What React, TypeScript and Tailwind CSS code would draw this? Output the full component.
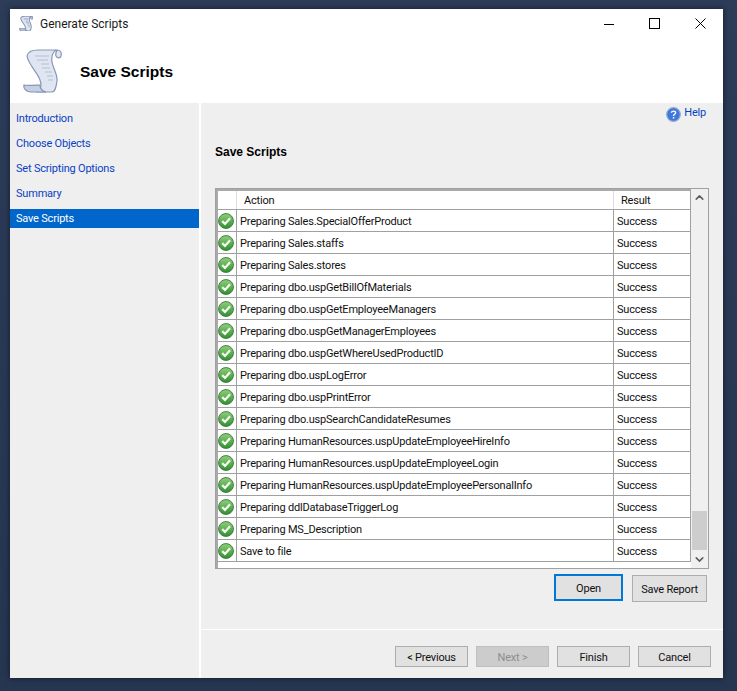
import React from 'react';
import { ChevronUp, ChevronDown } from 'lucide-react';

const navItems = ['Introduction', 'Choose Objects', 'Set Scripting Options', 'Summary', 'Save Scripts'];

const rows = [
  'Preparing Sales.SpecialOfferProduct',
  'Preparing Sales.staffs',
  'Preparing Sales.stores',
  'Preparing dbo.uspGetBillOfMaterials',
  'Preparing dbo.uspGetEmployeeManagers',
  'Preparing dbo.uspGetManagerEmployees',
  'Preparing dbo.uspGetWhereUsedProductID',
  'Preparing dbo.uspLogError',
  'Preparing dbo.uspPrintError',
  'Preparing dbo.uspSearchCandidateResumes',
  'Preparing HumanResources.uspUpdateEmployeeHireInfo',
  'Preparing HumanResources.uspUpdateEmployeeLogin',
  'Preparing HumanResources.uspUpdateEmployeePersonalInfo',
  'Preparing ddlDatabaseTriggerLog',
  'Preparing MS_Description',
  'Save to file',
];

const ScrollIcon: React.FC<{ size: number; stroke: number }> = ({ size, stroke }) => (
  <svg width={size} height={size * 1.1} viewBox="0 0 40 44" fill="none">
    <path d="M5 7 C6 2 11 1 16 1 L35 1 C38 1 40 3 39 7 C38 10 35 9 34 7 C33 4 35 2 35 1 C31 2 29 7 30 13 C31 20 36 25 35 32 C34 39 33 43 30 43 L14 43 C19 41 20 37 18 31 C16 24 6 15 5 7 Z" fill="#dfe5f1" stroke="#8796b6" strokeWidth={stroke} />
    <path d="M2 36 C7 37 14 36 18 36 C18 39 20 42 24 43 L9 43 C5 43 1 40 2 36 Z" fill="#c5cfe3" stroke="#8796b6" strokeWidth={stroke} />
    <path d="M13 7 H27 M15 11 H26 M19 15 H27 M20 19 H28 M23 23 H30 M25 27 H31 M26 31 H31" stroke="#b4bfd4" strokeWidth={stroke} />
  </svg>
);

const CheckIcon: React.FC = () => (
  <svg width="16" height="16" viewBox="0 0 17 17" className="shrink-0">
    <defs>
      <linearGradient id="okGreen" x1="0" y1="0" x2="0" y2="1">
        <stop offset="0" stopColor="#8fd07a" />
        <stop offset="1" stopColor="#2f8f2f" />
      </linearGradient>
    </defs>
    <circle cx="8.5" cy="8.5" r="7.9" fill="url(#okGreen)" stroke="#3b7f3b" strokeWidth="1" />
    <path d="M4.4 8.6 L7.4 11.6 L12.8 5.6" fill="none" stroke="#f6f9f2" strokeWidth="2.4" />
  </svg>
);

const HelpIcon: React.FC = () => (
  <svg width="15" height="15" viewBox="0 0 15 15">
    <circle cx="7.5" cy="7.5" r="6.8" fill="#3f78d8" stroke="#8aa9d8" strokeWidth="1.2" />
    <path d="M5.4 5.8 C5.6 3.6 9.6 3.6 9.6 5.8 C9.6 7.3 7.5 7.2 7.5 9" fill="none" stroke="#ffffff" strokeWidth="1.4" />
    <rect x="6.8" y="10" width="1.5" height="1.5" fill="#ffffff" />
  </svg>
);

const WizardButton: React.FC<{ label: string; disabled?: boolean }> = ({ label, disabled }) => (
  <button
    type="button"
    className={`w-[73px] h-[21px] border pt-[2px] leading-none ${disabled ? 'bg-[#cccccc] border-[#bfbfbf] text-[#8c8c8c]' : 'bg-[#e1e1e1] border-[#adadad] text-[#111111]'}`}
  >
    {label}
  </button>
);

export default function App() {
  return (
    <div className="w-[737px] h-[691px] bg-gradient-to-b from-[#2c3c59] to-[#263650] pl-[10px] pt-[9px] font-['Roboto',sans-serif] text-[11px] tracking-[-0.2px] text-[#111111] overflow-hidden">
      <div className="w-[713px] h-[669px] flex flex-col bg-[#efefef] shadow-[0_0_6px_rgba(0,0,0,0.55)]">
        <div className="bg-white h-[94px] flex flex-col shrink-0">
          <div className="h-[29px] flex items-center pl-[9px]">
            <ScrollIcon size={14} stroke={3} />
            <span className="ml-[7px] text-[12px] tracking-normal text-[#1a1a1a]">Generate Scripts</span>
            <div className="ml-auto flex items-center">
              <div className="w-[10px] h-px bg-black mr-[35px] mt-[1px]" />
              <div className="w-[11px] h-[11px] border border-black mr-[35px]" />
              <svg width="11" height="11" viewBox="0 0 11 11" className="mr-[17px]">
                <path d="M0.5 0.5 L10.5 10.5 M10.5 0.5 L0.5 10.5" stroke="#000000" strokeWidth="1" />
              </svg>
            </div>
          </div>
          <div className="flex items-center pl-[12px] h-[65px]">
            <ScrollIcon size={40} stroke={1.2} />
            <span className="ml-[18px] mt-[3px] text-[15.5px] tracking-normal font-bold text-black font-['Liberation_Sans',sans-serif]">Save Scripts</span>
          </div>
        </div>

        <div className="flex flex-1 min-h-0">
          <div className="w-[189px] shrink-0 pt-[6px] flex flex-col gap-[6px]">
            {navItems.map(item => (
              <div
                key={item}
                className={`h-[19px] pl-[6px] pt-[2px] flex items-center ${item === 'Save Scripts' ? 'bg-[#0066cc] text-white' : 'text-[#0a3fc4]'}`}
              >
                {item}
              </div>
            ))}
          </div>
          <div className="w-[2px] bg-white shrink-0" />

          <div className="flex-1 flex flex-col min-w-0">
            <div className="flex-1 pl-[14px] pr-[14px] flex flex-col">
              <div className="flex items-center justify-end h-[15px] mt-[4px] gap-[3px] pr-[3px]">
                <HelpIcon />
                <span className="text-[#0a3fc4] -mt-[2px]">Help</span>
              </div>
              <div className="mt-[23px] h-[14px] flex items-center font-bold text-[12px] tracking-normal text-black font-['Liberation_Sans',sans-serif]">Save Scripts</div>
              <div className="mt-[29px] w-[494px] h-[381px] border border-[#a0a0a0] bg-white flex overflow-hidden">
                <div className="w-[475px] h-full shrink-0 border-t-2 border-l-2 border-[#a9a9a9] flex flex-col">
                  <div className="flex h-[19px] shrink-0 border-b border-r border-[#a0a0a0]">
                    <div className="w-[19px] border-r border-[#dddddd]" />
                    <div className="w-[377px] border-r border-[#dddddd] pl-[7px] pt-[3px] flex items-center">Action</div>
                    <div className="flex-1 pl-[7px] pt-[3px] flex items-center">Result</div>
                  </div>
                  {rows.map(row => (
                    <div key={row} className="flex h-[22px] shrink-0 border-b border-r border-[#a0a0a0]">
                      <div className="w-[19px] border-r border-[#a0a0a0] pr-[2px] flex items-center justify-center">
                        <CheckIcon />
                      </div>
                      <div className="w-[377px] border-r border-[#a0a0a0] pl-[3px] pt-[3px] flex items-center whitespace-nowrap">{row}</div>
                      <div className="flex-1 pl-[3px] pt-[3px] flex items-center">Success</div>
                    </div>
                  ))}
                </div>
                <div className="flex-1 bg-[#f0f0f0] flex flex-col items-center">
                  <ChevronUp className="w-[13px] h-[13px] mt-[2px] text-[#606060]" strokeWidth={3} />
                  <div className="w-[15px] h-[39px] bg-[#cdcdcd] mt-[307px]" />
                  <ChevronDown className="w-[13px] h-[13px] mt-[3px] text-[#606060]" strokeWidth={3} />
                </div>
              </div>
              <div className="flex justify-end gap-[9px] mt-[5px] pr-[2px]">
                <button type="button" className="w-[69px] h-[27px] pt-[3px] bg-[#e1e1e1] border-2 border-[#0078d7]">Open</button>
                <button type="button" className="w-[75px] h-[27px] mt-[1px] pt-[3px] bg-[#e1e1e1] border border-[#adadad]">Save Report</button>
              </div>
            </div>
            <div className="h-[1px] bg-white shrink-0" />
            <div className="h-[48px] shrink-0 flex justify-end gap-[8px] pt-[16px] pr-[12px]">
              <WizardButton label="< Previous" />
              <WizardButton label="Next >" disabled />
              <WizardButton label="Finish" />
              <WizardButton label="Cancel" />
            </div>
          </div>
        </div>
      </div>
    </div>
  );
}
